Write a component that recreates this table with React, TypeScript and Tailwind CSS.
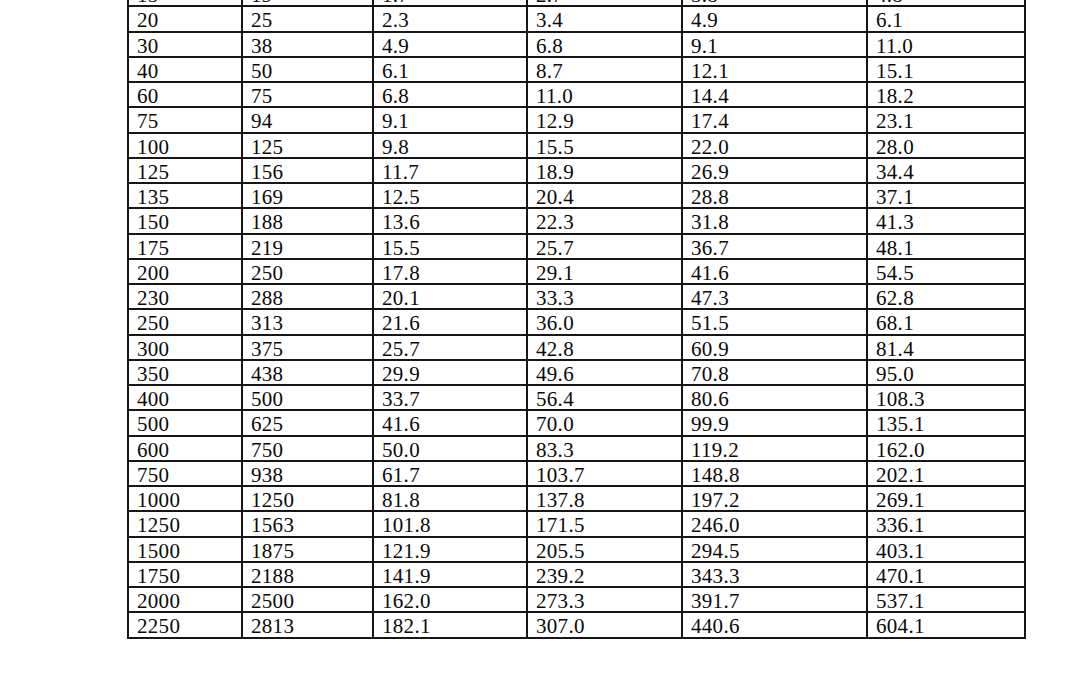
const ROWS: string[][] = [
  ['15', '19', '1.7', '2.7', '3.8', '4.8'],
  ['20', '25', '2.3', '3.4', '4.9', '6.1'],
  ['30', '38', '4.9', '6.8', '9.1', '11.0'],
  ['40', '50', '6.1', '8.7', '12.1', '15.1'],
  ['60', '75', '6.8', '11.0', '14.4', '18.2'],
  ['75', '94', '9.1', '12.9', '17.4', '23.1'],
  ['100', '125', '9.8', '15.5', '22.0', '28.0'],
  ['125', '156', '11.7', '18.9', '26.9', '34.4'],
  ['135', '169', '12.5', '20.4', '28.8', '37.1'],
  ['150', '188', '13.6', '22.3', '31.8', '41.3'],
  ['175', '219', '15.5', '25.7', '36.7', '48.1'],
  ['200', '250', '17.8', '29.1', '41.6', '54.5'],
  ['230', '288', '20.1', '33.3', '47.3', '62.8'],
  ['250', '313', '21.6', '36.0', '51.5', '68.1'],
  ['300', '375', '25.7', '42.8', '60.9', '81.4'],
  ['350', '438', '29.9', '49.6', '70.8', '95.0'],
  ['400', '500', '33.7', '56.4', '80.6', '108.3'],
  ['500', '625', '41.6', '70.0', '99.9', '135.1'],
  ['600', '750', '50.0', '83.3', '119.2', '162.0'],
  ['750', '938', '61.7', '103.7', '148.8', '202.1'],
  ['1000', '1250', '81.8', '137.8', '197.2', '269.1'],
  ['1250', '1563', '101.8', '171.5', '246.0', '336.1'],
  ['1500', '1875', '121.9', '205.5', '294.5', '403.1'],
  ['1750', '2188', '141.9', '239.2', '343.3', '470.1'],
  ['2000', '2500', '162.0', '273.3', '391.7', '537.1'],
  ['2250', '2813', '182.1', '307.0', '440.6', '604.1'],
];

export default function App() {
  return (
    <div className="w-[1080px] h-[675px] bg-white overflow-hidden">
      {/* table sits partly above the top edge, like the scanned page */}
      <div className="-mt-[18px] ml-[127px] w-[899px] border-l-2 border-[#161616] font-['Liberation_Serif',serif] text-[21px] leading-none text-[#0a0a0a]">
        {ROWS.map((row, i) => (
          <div
            key={i}
            className="grid grid-cols-[114px_131px_154px_155px_185px_158px] h-[25.25px] border-b-2 border-[#161616]"
          >
            {row.map((cell, j) => (
              <div key={j} className="border-r-2 border-[#161616] pl-[8px] pt-[3px] tracking-[0.3px]">
                {cell}
              </div>
            ))}
          </div>
        ))}
      </div>
    </div>
  );
}
